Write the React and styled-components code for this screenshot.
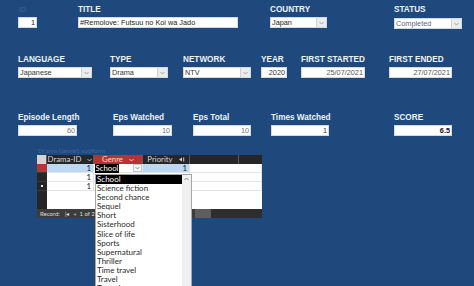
import React from "react";
import styled, { createGlobalStyle } from "styled-components";

const Global = createGlobalStyle`
  html, body {
    margin: 0;
    padding: 0;
    background: #1f497d;
    overflow: hidden;
  }
  #root {
    width: 474px;
    height: 286px;
    overflow: hidden;
  }
`;

const Page = styled.div`
  width: 474px;
  height: 286px;
  box-sizing: border-box;
  padding: 5px 0 0 18px;
  background: #1f497d;
  font-family: "Liberation Sans", Arial, sans-serif;
`;

const Row = styled.div`
  display: flex;
  align-items: flex-start;
  margin-top: ${(p) => p.$top || 0}px;
`;

const Field = styled.div`
  display: flex;
  flex-direction: column;
  width: ${(p) => p.$w}px;
  margin-left: ${(p) => p.$gap || 0}px;
  flex: 0 0 auto;
`;

const Label = styled.div`
  height: 10px;
  line-height: 10px;
  white-space: nowrap;
  color: ${(p) => (p.$faint ? "#3d6899" : "#eef2f8")};
  font-weight: ${(p) => (p.$faint ? "normal" : "bold")};
  font-size: ${(p) => (p.$faint ? "7px" : "8.2px")};
  padding-left: ${(p) => (p.$faint ? "1px" : "0")};
`;

const Box = styled.div`
  margin-top: ${(p) => (p.$drop ? 3 : 2)}px;
  height: 11px;
  box-sizing: border-box;
  background: #fff;
  border: 1px solid #d3d9e1;
  display: flex;
  align-items: center;
  font-size: 7.3px;
  line-height: 9px;
  white-space: nowrap;
  overflow: hidden;
  color: ${(p) => p.$color || "#1b1b1b"};
  font-weight: ${(p) => (p.$bold ? "bold" : "normal")};
  padding: 0 1px;
`;

const BoxText = styled.span`
  flex: 1;
  text-align: ${(p) => (p.$right ? "right" : "left")};
  overflow: hidden;
`;

const ArrowBtn = styled.span`
  flex: 0 0 9px;
  height: 9px;
  margin-right: -1px;
  background: #ececec;
  border-left: 1px solid #d0d0d0;
  display: flex;
  align-items: center;
  justify-content: center;
`;

const Chevron = ({ up, color = "#9a9a9a" }) => (
  <svg width="5" height="4" viewBox="0 0 5 4">
    <path
      d={up ? "M0.5 3 L2.5 1 L4.5 3" : "M0.5 1 L2.5 3 L4.5 1"}
      fill="none"
      stroke={color}
      strokeWidth="0.9"
    />
  </svg>
);

function Input({ label, w, gap, value, right, drop, color, bold, faint, lower }) {
  return (
    <Field $w={w} $gap={gap}>
      <Label $faint={faint}>{label}</Label>
      <Box $color={color} $bold={bold} $drop={lower}>
        <BoxText $right={right}>{value}</BoxText>
        {drop && (
          <ArrowBtn>
            <Chevron />
          </ArrowBtn>
        )}
      </Box>
    </Field>
  );
}

/* ---------- subform ---------- */

const Subform = styled.div`
  margin-top: 10px;
  margin-left: 19px;
`;

const SubLabel = styled.div`
  height: 9px;
  line-height: 9px;
  font-family: Lato, "Noto Sans", sans-serif;
  font-size: 6.5px;
  color: #3d6899;
  padding-left: 1px;
`;

const Grid = styled.div`
  position: relative;
  width: 225px;
  height: 63px;
  background: #262626;
  font-family: Lato, "Noto Sans", sans-serif;
  font-size: 7.8px;
`;

const HeadRow = styled.div`
  display: flex;
  height: 9px;
`;

const HeadCell = styled.div`
  width: ${(p) => p.$w}px;
  box-sizing: border-box;
  background: ${(p) => p.$bg || "#262626"};
  border-right: 1px solid ${(p) => (p.$last ? "transparent" : "#5a5a5a")};
  color: ${(p) => p.$color || "#d6d6d6"};
  display: flex;
  align-items: center;
  justify-content: center;
  gap: 6px;
  line-height: 9px;
  white-space: nowrap;
`;

const Body = styled.div`
  display: flex;
  height: 45px;
`;

const Selectors = styled.div`
  width: 10px;
  display: flex;
  flex-direction: column;
  background: #262626;
`;

const Sel = styled.div`
  height: 9px;
  box-sizing: border-box;
  background: ${(p) => (p.$current ? "#b83434" : "#262626")};
  border-bottom: 1px solid #3a3a3a;
  display: flex;
  align-items: center;
  justify-content: center;
`;

const Dot = styled.span`
  width: 2px;
  height: 2px;
  background: #eee;
`;

const Data = styled.div`
  width: 215px;
  background: #fff;
`;

const DataRow = styled.div`
  display: flex;
  height: 9px;
`;

const Cell = styled.div`
  width: ${(p) => p.$w}px;
  box-sizing: border-box;
  background: ${(p) => (p.$sel ? "#bed8f2" : "#fff")};
  border-bottom: 1px solid #e4e4e4;
  border-right: 1px solid #e4e4e4;
  color: #1a1a1a;
  display: flex;
  align-items: center;
  justify-content: ${(p) => (p.$right ? "flex-end" : "flex-start")};
  padding: 0 2px 0 1px;
  line-height: 9px;
  white-space: nowrap;
`;

const Highlight = styled.span`
  background: #000;
  color: #fff;
  padding: 0 0.5px;
`;

const CellBtn = styled.span`
  margin-left: auto;
  margin-right: -2px;
  width: 9px;
  height: 8px;
  box-sizing: border-box;
  border: 1px solid #c6c6c6;
  background: #f4f8fc;
  display: flex;
  align-items: center;
  justify-content: center;
`;

const RecordBar = styled.div`
  display: flex;
  height: 9px;
  background: #3c3c3c;
  color: #dedede;
  font-size: 6px;
  line-height: 9px;
`;

const Nav = styled.div`
  width: 155px;
  padding-left: 3px;
  display: flex;
  white-space: nowrap;
`;

const NavPart = styled.span`
  margin-right: ${(p) => p.$after}px;
  color: ${(p) => (p.$dim ? "#8a8a8a" : "#dedede")};
`;

const Thumb = styled.div`
  width: 16px;
  background: #5e5e5e;
`;

const Track = styled.div`
  flex: 1;
  background: #2e2e2e;
`;

const DropList = styled.div`
  position: absolute;
  left: 58px;
  top: 19px;
  width: 97px;
  height: 130px;
  box-sizing: border-box;
  background: #fff;
  border: 1px solid #a6a6a6;
  display: flex;
`;

const Items = styled.div`
  flex: 1;
`;

const Item = styled.div`
  height: 9.1px;
  line-height: 9.1px;
  padding-left: 1px;
  font-size: 8px;
  white-space: nowrap;
  color: ${(p) => (p.$active ? "#fff" : "#2a2a2a")};
  background: ${(p) => (p.$active ? "#000" : "transparent")};
`;

const ScrollV = styled.div`
  width: 9px;
  background: #f0f0f0;
  display: flex;
  justify-content: center;
  padding-top: 2px;
`;

const genres = [
  "School",
  "Science fiction",
  "Second chance",
  "Sequel",
  "Short",
  "Sisterhood",
  "Slice of life",
  "Sports",
  "Supernatural",
  "Thriller",
  "Time travel",
  "Travel",
  "Tragedy",
];

const SortIcon = () => (
  <svg width="6" height="5" viewBox="0 0 6 5">
    <path d="M0 2.5 L3 0.5 L3 4.5 Z" fill="#cfcfcf" />
    <rect x="4.2" y="0.5" width="1" height="4" fill="#cfcfcf" />
  </svg>
);

function GenreGrid() {
  return (
    <Subform>
      <SubLabel>Drama Genre1 subform</SubLabel>
      <Grid>
        <HeadRow>
          <HeadCell $w={10} $bg="#d4d4d4" />
          <HeadCell $w={47}>
            Drama-ID <Chevron color="#cfcfcf" />
          </HeadCell>
          <HeadCell $w={49} $bg="#b83434" $color="#f3dada">
            Genre <Chevron color="#f3dada" />
          </HeadCell>
          <HeadCell $w={47}>
            Priority <SortIcon />
          </HeadCell>
          <HeadCell $w={49} />
          <HeadCell $w={23} $last />
        </HeadRow>
        <Body>
          <Selectors>
            <Sel $current />
            <Sel />
            <Sel>
              <Dot />
            </Sel>
          </Selectors>
          <Data>
            <DataRow>
              <Cell $w={47} $sel $right>1</Cell>
              <Cell $w={49}>
                <Highlight>School</Highlight>
                <CellBtn>
                  <Chevron color="#6a8fb8" />
                </CellBtn>
              </Cell>
              <Cell $w={47} $sel $right>1</Cell>
              <Cell $w={72} />
            </DataRow>
            <DataRow>
              <Cell $w={47} $right>1</Cell>
              <Cell $w={49} />
              <Cell $w={47} />
              <Cell $w={72} />
            </DataRow>
            <DataRow>
              <Cell $w={47} $right>1</Cell>
              <Cell $w={49} />
              <Cell $w={47} />
              <Cell $w={72} />
            </DataRow>
          </Data>
        </Body>
        <RecordBar>
          <Nav>
            <NavPart $after={5}>Record:</NavPart>
            <NavPart $after={4}>|◂</NavPart>
            <NavPart $after={3} $dim>◂</NavPart>
            <NavPart>1 of 2</NavPart>
          </Nav>
          <Thumb />
          <Track />
        </RecordBar>
        <DropList>
          <Items>
            {genres.map((g, i) => (
              <Item key={g} $active={i === 0}>
                {g}
              </Item>
            ))}
          </Items>
          <ScrollV>
            <Chevron up color="#777" />
          </ScrollV>
        </DropList>
      </Grid>
    </Subform>
  );
}

export default function App() {
  return (
    <>
      <Global />
      <Page>
        <Row>
          <Input label="ID" faint w={19} value="1" right />
          <Input label="TITLE" w={160} gap={41} value="#Remolove: Futsuu no Koi wa Jado" />
          <Input label="COUNTRY" w={57} gap={32} value="Japan" drop />
          <Input label="STATUS" w={68} gap={67} value="Completed" drop lower color="#5a6a7e" />
        </Row>
        <Row $top={26}>
          <Input label="LANGUAGE" w={74} value="Japanese" drop color="#333" />
          <Input label="TYPE" w={58} gap={18} value="Drama" drop color="#333" />
          <Input label="NETWORK" w={68} gap={15} value="NTV" drop color="#333" />
          <Input label="YEAR" w={26} gap={10} value="2020" right color="#333" />
          <Input label="FIRST STARTED" w={64} gap={14} value="25/07/2021" right color="#555" />
          <Input label="FIRST ENDED" w={63} gap={24} value="27/07/2021" right color="#555" />
        </Row>
        <Row $top={35}>
          <Input label="Episode Length" w={59} value="60" right color="#777" />
          <Input label="Eps Watched" w={59} gap={36} value="10" right color="#777" />
          <Input label="Eps Total" w={58} gap={21} value="10" right color="#777" />
          <Input label="Times Watched" w={58} gap={20} value="1" right color="#333" />
          <Input label="SCORE" w={58} gap={65} value="6.5" right bold color="#111" />
        </Row>
        <GenreGrid />
      </Page>
    </>
  );
}
